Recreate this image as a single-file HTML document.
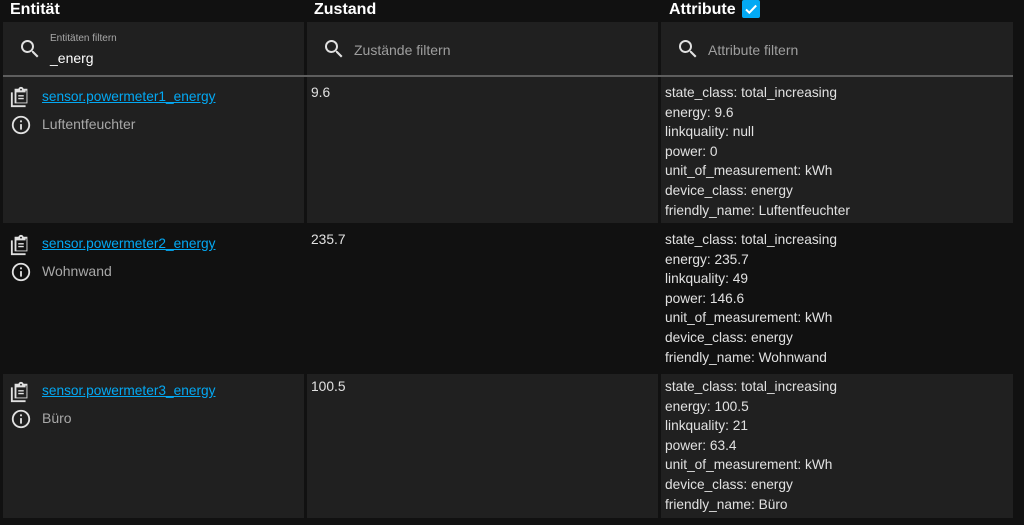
<!DOCTYPE html>
<html><head><meta charset="utf-8"><style>
*{margin:0;padding:0;box-sizing:border-box}
body{width:1024px;height:525px;background:#111;font-family:"Liberation Sans",sans-serif;color:#e1e1e1;position:relative;overflow:hidden;font-size:13.8px}
.a{position:absolute}
.h{font-weight:bold;font-size:16px;color:#fff;top:1px}
.f{background:#202020;top:22px;height:53px}
.line{top:75px;height:2px;background:#5e5e5e;left:3px;width:1010px}
.c{background:#202020}
.ph{color:#9e9e9e;font-size:14px;top:19px}
.lnk{color:#03a9f4;text-decoration:underline;font-size:13.7px}
.sub{color:#a8a8a8;font-size:14px}
.attr{line-height:19.6px;font-size:13.7px;color:#e1e1e1}
svg{position:absolute}
</style></head><body>
<div class="a h" style="left:10px">Entität</div>
<div class="a h" style="left:314px">Zustand</div>
<div class="a h" style="left:669px">Attribute</div>
<div class="a" style="left:742px;top:0;width:18px;height:18px;background:#03a9f4;border-radius:2px"><svg width="18" height="18" viewBox="0 0 18 18"><path d="M4 9.5l3.3 3.2L14.2 5.5" stroke="#fff" stroke-width="2" fill="none"/></svg></div>

<div class="a f" style="left:3px;width:301px">
 <svg style="left:15px;top:15px" width="24" height="24" viewBox="0 0 24 24"><path fill="#e1e1e1" d="M9.5 3A6.5 6.5 0 0 1 16 9.5c0 1.6-.6 3.1-1.6 4.2l.3.3h.8l5 5-1.5 1.5-5-5v-.8l-.3-.3A6.5 6.5 0 0 1 9.5 16 6.5 6.5 0 0 1 3 9.5 6.5 6.5 0 0 1 9.5 3m0 2C7 5 5 7 5 9.5S7 14 9.5 14 14 12 14 9.5 12 5 9.5 5z"/></svg>
 <div class="a" style="left:47px;top:11px;font-size:10px;color:#a8a8a8">Entitäten filtern</div>
 <div class="a" style="left:47px;top:28px;font-size:14px;color:#fff">_energ</div>
</div>
<div class="a f" style="left:307px;width:351px">
 <svg style="left:15px;top:15px" width="24" height="24" viewBox="0 0 24 24"><path fill="#e1e1e1" d="M9.5 3A6.5 6.5 0 0 1 16 9.5c0 1.6-.6 3.1-1.6 4.2l.3.3h.8l5 5-1.5 1.5-5-5v-.8l-.3-.3A6.5 6.5 0 0 1 9.5 16 6.5 6.5 0 0 1 3 9.5 6.5 6.5 0 0 1 9.5 3m0 2C7 5 5 7 5 9.5S7 14 9.5 14 14 12 14 9.5 12 5 9.5 5z"/></svg>
 <div class="a ph" style="left:47px;top:20px">Zustände filtern</div>
</div>
<div class="a f" style="left:661px;width:352px">
 <svg style="left:15px;top:15px" width="24" height="24" viewBox="0 0 24 24"><path fill="#e1e1e1" d="M9.5 3A6.5 6.5 0 0 1 16 9.5c0 1.6-.6 3.1-1.6 4.2l.3.3h.8l5 5-1.5 1.5-5-5v-.8l-.3-.3A6.5 6.5 0 0 1 9.5 16 6.5 6.5 0 0 1 3 9.5 6.5 6.5 0 0 1 9.5 3m0 2C7 5 5 7 5 9.5S7 14 9.5 14 14 12 14 9.5 12 5 9.5 5z"/></svg>
 <div class="a ph" style="left:47px;top:20px">Attribute filtern</div>
</div>
<div class="a line"></div>

<div class="a c" style="left:3px;top:77px;width:301px;height:146px"></div>
<div class="a c" style="left:307px;top:77px;width:351px;height:146px"></div>
<div class="a c" style="left:661px;top:77px;width:352px;height:146px"></div>
<div class="a c" style="left:3px;top:374px;width:301px;height:144px"></div>
<div class="a c" style="left:307px;top:374px;width:351px;height:144px"></div>
<div class="a c" style="left:661px;top:374px;width:352px;height:144px"></div>

<!-- row 1 -->
<svg style="left:10px;top:86px" width="22" height="22" viewBox="0 0 24 24"><path fill="#e1e1e1" d="M19 3h-4.2C14.4 1.8 13.3 1 12 1s-2.4.8-2.8 2H5v16h14V3m-7 0a1 1 0 1 1 0 2 1 1 0 0 1 0-2M7 7h10V5h1v13H7V7m2 3v1.5h6V10H9m0 3v1.5h6V13H9M3 7v14h14v2H1V7h2z"/></svg>
<svg style="left:10px;top:114px" width="22" height="22" viewBox="0 0 24 24"><path fill="#e1e1e1" d="M11 7h2v2h-2V7m0 4h2v6h-2v-6m1-9a10 10 0 1 0 0 20 10 10 0 0 0 0-20m0 18a8 8 0 1 1 0-16 8 8 0 0 1 0 16z"/></svg>
<div class="a lnk" style="left:42px;top:89px">sensor.powermeter1_energy</div>
<div class="a sub" style="left:42px;top:116px">Luftentfeuchter</div>
<div class="a" style="left:311px;top:85px">9.6</div>
<div class="a attr" style="left:665px;top:83px">state_class: total_increasing<br>energy: 9.6<br>linkquality: null<br>power: 0<br>unit_of_measurement: kWh<br>device_class: energy<br>friendly_name: Luftentfeuchter</div>

<!-- row 2 -->
<svg style="left:10px;top:234px" width="22" height="22" viewBox="0 0 24 24"><path fill="#e1e1e1" d="M19 3h-4.2C14.4 1.8 13.3 1 12 1s-2.4.8-2.8 2H5v16h14V3m-7 0a1 1 0 1 1 0 2 1 1 0 0 1 0-2M7 7h10V5h1v13H7V7m2 3v1.5h6V10H9m0 3v1.5h6V13H9M3 7v14h14v2H1V7h2z"/></svg>
<svg style="left:10px;top:261px" width="22" height="22" viewBox="0 0 24 24"><path fill="#e1e1e1" d="M11 7h2v2h-2V7m0 4h2v6h-2v-6m1-9a10 10 0 1 0 0 20 10 10 0 0 0 0-20m0 18a8 8 0 1 1 0-16 8 8 0 0 1 0 16z"/></svg>
<div class="a lnk" style="left:42px;top:236px">sensor.powermeter2_energy</div>
<div class="a sub" style="left:42px;top:263px">Wohnwand</div>
<div class="a" style="left:311px;top:232px">235.7</div>
<div class="a attr" style="left:665px;top:230px">state_class: total_increasing<br>energy: 235.7<br>linkquality: 49<br>power: 146.6<br>unit_of_measurement: kWh<br>device_class: energy<br>friendly_name: Wohnwand</div>

<!-- row 3 -->
<svg style="left:10px;top:381px" width="22" height="22" viewBox="0 0 24 24"><path fill="#e1e1e1" d="M19 3h-4.2C14.4 1.8 13.3 1 12 1s-2.4.8-2.8 2H5v16h14V3m-7 0a1 1 0 1 1 0 2 1 1 0 0 1 0-2M7 7h10V5h1v13H7V7m2 3v1.5h6V10H9m0 3v1.5h6V13H9M3 7v14h14v2H1V7h2z"/></svg>
<svg style="left:10px;top:408px" width="22" height="22" viewBox="0 0 24 24"><path fill="#e1e1e1" d="M11 7h2v2h-2V7m0 4h2v6h-2v-6m1-9a10 10 0 1 0 0 20 10 10 0 0 0 0-20m0 18a8 8 0 1 1 0-16 8 8 0 0 1 0 16z"/></svg>
<div class="a lnk" style="left:42px;top:383px">sensor.powermeter3_energy</div>
<div class="a sub" style="left:42px;top:410px">Büro</div>
<div class="a" style="left:311px;top:379px">100.5</div>
<div class="a attr" style="left:665px;top:377px">state_class: total_increasing<br>energy: 100.5<br>linkquality: 21<br>power: 63.4<br>unit_of_measurement: kWh<br>device_class: energy<br>friendly_name: Büro</div>
</body></html>
